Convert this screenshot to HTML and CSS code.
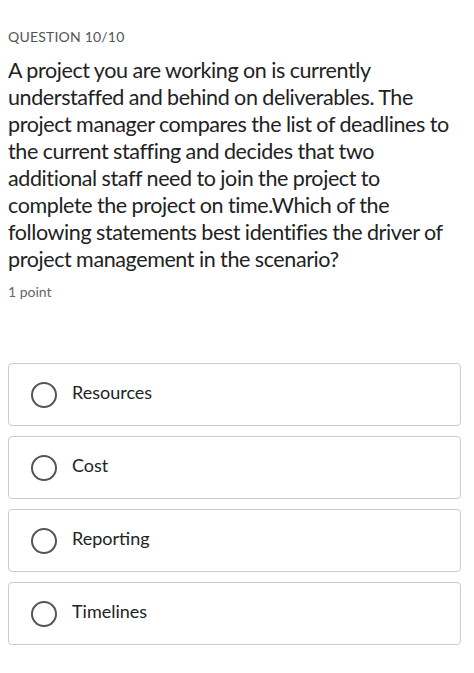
FILE: index.html
```html
<!DOCTYPE html>
<html>
<head>
<meta charset="utf-8">
<link rel="stylesheet" href="styles.css">
</head>
<body>
<div class="page">
  <div class="qnum">QUESTION 10/10</div>
  <div class="question">A project you are working on is currently<br>understaffed and behind on deliverables. The<br>project manager compares the list of deadlines to<br>the current staffing and decides that two<br>additional staff need to join the project to<br>complete the project on time.Which of the<br>following statements best identifies the driver of<br>project management in the scenario?</div>
  <div class="points">1 point</div>
  <div class="options">
    <div class="option"><span class="radio"></span><span class="label">Resources</span></div>
    <div class="option"><span class="radio"></span><span class="label">Cost</span></div>
    <div class="option"><span class="radio"></span><span class="label">Reporting</span></div>
    <div class="option"><span class="radio"></span><span class="label">Timelines</span></div>
  </div>
</div>
</body>
</html>
```
FILE: styles.css
```css
html, body {
  margin: 0;
  padding: 0;
  background: #fff;
}
.page {
  padding: 28px 13px 0 8px;
  font-family: Lato, "Open Sans", sans-serif;
  color: #222;
}
.qnum {
  font-size: 14px;
  color: #555;
  line-height: 18px;
  letter-spacing: 0.2px;
}
.question {
  margin-top: 11px;
  font-size: 21.5px;
  line-height: 27px;
  letter-spacing: -0.4px;
  word-spacing: -0.3px;
  white-space: nowrap;
}
.points {
  margin-top: 10px;
  font-size: 14px;
  color: #666;
  line-height: 18px;
}
.options {
  margin-top: 62px;
  display: flex;
  flex-direction: column;
  gap: 10px;
}
.option {
  height: 61px;
  border: 1px solid #ccc;
  border-radius: 4px;
  display: flex;
  align-items: center;
  padding-left: 22px;
}
.radio {
  width: 22px;
  height: 22px;
  border: 2px solid #555;
  border-radius: 50%;
  margin-right: 15px;
}
.label {
  font-size: 18px;
  color: #222;
  margin-top: -5px;
}
```
